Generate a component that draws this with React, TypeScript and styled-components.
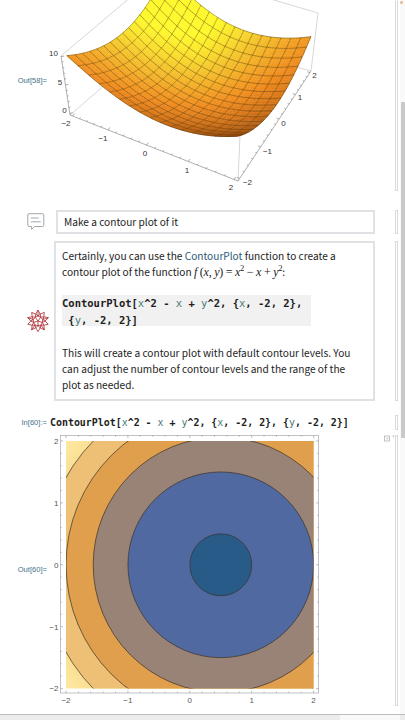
import React from 'react';
import styled, { createGlobalStyle } from 'styled-components';

const SANS = '"Noto Sans CJK SC", "Noto Sans", sans-serif';
const MONO = '"DejaVu Sans Mono", monospace';
const PLOT = '"Liberation Sans", Arial, sans-serif';

const GlobalStyle = createGlobalStyle`
  * { box-sizing: border-box; }
  body { margin: 0; background: #fff; overflow: hidden; }
`;

const Window = styled.div`
  display: grid;
  grid-template-columns: 400px 5px;
  grid-template-rows: 714px 6px;
  width: 405px;
  height: 720px;
  overflow: hidden;
  background: #fff;
  color: #1d1d1d;
  font-family: ${SANS};
`;

const Notebook = styled.main`
  display: flex;
  flex-direction: column;
`;

const Cell = styled.section<{ $height: number; $gap?: number }>`
  display: grid;
  grid-template-columns: 49px 346px 3px;
  height: ${p => p.$height}px;
  margin-top: ${p => p.$gap || 0}px;
`;

const Bracket = styled.div<{ $openTop?: boolean }>`
  border: 1px solid #dadada;
  border-top-color: ${p => (p.$openTop ? 'transparent' : '#dadada')};
`;

const Label = styled.div<{ $top?: number }>`
  padding: ${p => p.$top || 0}px 2px 0 0;
  text-align: right;
  white-space: nowrap;
  font: 7.6px/10px ${PLOT};
  color: #3f7389;
`;

const IconSlot = styled.div<{ $top: number; $left: number }>`
  padding: ${p => p.$top}px 0 0 ${p => p.$left}px;
  line-height: 0;
`;

const Question = styled.div`
  margin-left: 7px;
  width: 319px;
  height: 24px;
  padding-left: 6px;
  border: 2px solid #dfe1e4;
  font-size: 10.15px;
  line-height: 20px;
  white-space: nowrap;
`;

const Answer = styled.div`
  margin-left: 5px;
  width: 321px;
  height: 160px;
  padding: 5px 0 0 6px;
  border: 2px solid #dfe1e4;
  font-size: 10.15px;
  line-height: 16px;
  white-space: nowrap;
`;

const Paragraph = styled.p`
  margin: 0;
  height: 32px;
  line-height: 16px;
`;

const FunctionLink = styled.span`
  color: #2b5878;
`;

const Formula = styled.span`
  font-family: "Liberation Serif", serif;
  font-size: 12px;
  line-height: 1;
  letter-spacing: -0.25px;
  sup {
    font-size: 8.5px;
    line-height: 0;
    vertical-align: 5px;
  }
`;

const CodeBlock = styled.pre`
  margin: 15px 0 19px;
  width: 249px;
  height: 31px;
  background: #f1f1f1;
  font: 700 10.5px/17px ${MONO};
`;

const Input = styled.pre`
  margin: 0;
  padding: 1px 0 0 1px;
  font: 700 9.93px/14px ${MONO};
`;

const Variable = styled.span`
  color: #477b78;
  font-weight: 400;
`;

const Output = styled.div`
  display: flex;
  justify-content: space-between;
  align-items: flex-start;
  svg { display: block; }
`;

const Scrollbar = styled.div`
  display: flex;
  flex-direction: column;
  align-items: flex-end;
  background: #f9f9f9;
`;

const ScrollHint = styled.div`
  width: 3px;
  height: 3px;
  margin: 1px 2px 98px 0;
  border-radius: 50%;
  background: #e5b98c;
`;

const Thumb = styled.div`
  width: 4px;
  height: 336px;
  background: #c9c9c9;
`;

const StatusBar = styled.footer`
  grid-column: 1 / 3;
  display: grid;
  grid-template-columns: 340px 60px 5px;
  border-top: 1px solid #bdbdbd;
  background: #ececec;
`;

const StatusGap = styled.div`
  grid-column: 2;
  background: #f9f9f9;
`;

type Point = [number, number];
type Quad = [Point, Point, Point, Point];

// corners in order (-x,-y) (+x,-y) (+x,+y) (-x,+y)
const FLOOR: Quad = [[70, 115], [238, 181], [311, 71], [166, 32]];
const CEILING: Quad = [[61, 56], [241, 113], [318, 13], [165, -32]];

function quadPoint([p0, p1, p2, p3]: Quad, u: number, v: number): Point {
  const dx1 = p1[0] - p2[0];
  const dx2 = p3[0] - p2[0];
  const dy1 = p1[1] - p2[1];
  const dy2 = p3[1] - p2[1];
  const sx = p0[0] - p1[0] + p2[0] - p3[0];
  const sy = p0[1] - p1[1] + p2[1] - p3[1];
  const det = dx1 * dy2 - dx2 * dy1;
  const g = (sx * dy2 - dx2 * sy) / det;
  const h = (dx1 * sy - sx * dy1) / det;
  const w = g * u + h * v + 1;
  return [
    ((p1[0] - p0[0] + g * p1[0]) * u + (p3[0] - p0[0] + h * p3[0]) * v + p0[0]) / w,
    ((p1[1] - p0[1] + g * p1[1]) * u + (p3[1] - p0[1] + h * p3[1]) * v + p0[1]) / w,
  ];
}

const f = (x: number, y: number) => x * x - x + y * y;

function project(x: number, y: number): Point {
  const u = (x + 2.08) / 4.16;
  const v = (y + 2.08) / 4.16;
  const t = (f(x, y) + 0.3) / 10.4;
  const a = quadPoint(FLOOR, u, v);
  const b = quadPoint(CEILING, u, v);
  return [a[0] + (b[0] - a[0]) * t, a[1] + (b[1] - a[1]) * t];
}

const RAMP: [number, number[]][] = [
  [-0.6, [150, 74, 12]],
  [-0.35, [205, 108, 18]],
  [-0.08, [240, 138, 26]],
  [0.08, [242, 160, 32]],
  [0.28, [244, 196, 40]],
  [0.5, [255, 248, 40]],
];

function shade(x: number, y: number) {
  const nx = -(2 * x - 1) * 0.156;
  const ny = -2 * y * 0.156;
  // slopes facing the yellow light have nx > 0 and ny < 0
  const t = (nx - ny) / Math.SQRT2 / Math.hypot(nx, ny, 1) - 0.08 * Math.abs(nx + ny);
  let i = 0;
  while (i < RAMP.length - 2 && t > RAMP[i + 1][0]) i++;
  const [t0, c0] = RAMP[i];
  const [t1, c1] = RAMP[i + 1];
  const k = Math.max(0, Math.min(1, (t - t0) / (t1 - t0)));
  return `rgb(${c0.map((c, n) => Math.round(c + (c1[n] - c) * k)).join(',')})`;
}

const STEPS = 16;
const SUB = 4;
const N = STEPS * SUB;
const at = (i: number) => -2 + (4 * i) / N;

interface Patch {
  points: string;
  fill: string;
  edges: string;
}

// painted from the far corner to the near one
const patches: Patch[] = [];
for (let j = N - 1; j >= 0; j--) {
  for (let i = 0; i < N; i++) {
    const a = project(at(i), at(j));
    const b = project(at(i + 1), at(j));
    const c = project(at(i + 1), at(j + 1));
    const d = project(at(i), at(j + 1));
    let edges = '';
    if (i % SUB === 0) edges += `M${a}L${d}`;
    if ((j + 1) % SUB === 0) edges += `M${d}L${c}`;
    if (i === N - 1) edges += `M${b}L${c}`;
    if (j === 0) edges += `M${a}L${b}`;
    patches.push({
      points: [a, b, c, d].join(' '),
      fill: shade(at(i + 0.5), at(j + 0.5)),
      edges,
    });
  }
}

const AXIS_LABELS: [string, number, number][] = [
  ['10', 53.5, 56], ['5', 60, 85], ['0', 64.5, 112.5],
  ['−2', 66, 125.5], ['−1', 103, 140.5], ['0', 145, 156], ['1', 187, 172.5], ['2', 231, 189.5],
  ['−2', 247.5, 184.5], ['−1', 267.5, 153.5], ['0', 283.5, 125.5], ['1', 300, 100], ['2', 314.5, 77.5],
];

const axisTicks = (() => {
  let d = '';
  for (let k = 0; k <= 20; k++) {
    const u = (k / 5 + 0.08) / 4.16;
    const len = k % 5 === 0 ? 2.6 : 1.4;
    const [x, y] = quadPoint(FLOOR, u, 0);
    d += `M${x},${y}l${len * 0.6},${-len}`;
    const [x2, y2] = quadPoint(FLOOR, 1, u);
    d += `M${x2},${y2}l${-len},${-len * 0.35}`;
  }
  for (let k = 0; k <= 10; k++) {
    const t = (k + 0.3) / 10.4;
    d += `M${70 - 9 * t},${115 - 59 * t}l${k % 5 ? 1.5 : 3},-.5`;
  }
  return d;
})();

function SurfacePlot() {
  return (
    <svg width="345" height="191" viewBox="49 0 345 191" fontFamily={PLOT}>
      <g fill="none" stroke="#d0cccc" strokeWidth=".8">
        <path d="M61 56L165-32L318 13L311 71L166 32L70 115M166 32V-32M238 181L240 135" />
      </g>
      <path d="M61 56L70 115L238 181L311 71" fill="none" stroke="#8c8c8c" strokeWidth=".7" />
      <path d={axisTicks} stroke="#777" strokeWidth=".6" />
      {patches.map((p, n) => (
        <g key={n}>
          <polygon points={p.points} fill={p.fill} stroke={p.fill} strokeWidth=".4" />
          {p.edges && <path d={p.edges} stroke="#4c3508" strokeOpacity=".75" strokeWidth=".6" />}
        </g>
      ))}
      <g fontSize="8" fill="#333" textAnchor="middle">
        {AXIS_LABELS.map(([text, x, y], n) => (
          <text key={n} x={x} y={y}>{text}</text>
        ))}
      </g>
    </svg>
  );
}

const UNIT = 61.9;
const CONTOURS = [
  { level: 8, fill: '#edc075' },
  { level: 6, fill: '#df9f4c' },
  { level: 4, fill: '#998376' },
  { level: 2, fill: '#5069a0' },
  { level: 0, fill: '#285b88' },
];

const frameTicks = Array.from({ length: 21 }, (_, k) => {
  const p = (k * UNIT) / 5;
  const len = k % 5 === 0 ? 2.4 : 1.3;
  return `M${66 + p} 693v${-len}M${66 + p} 435.5v${len}M60.5 ${441 + p}h${len}M318.5 ${441 + p}h${-len}`;
}).join('');

function ContourPlot() {
  return (
    <svg width="275" height="270" viewBox="49 435 275 270" fontFamily={PLOT}>
      <defs>
        <clipPath id="region">
          <rect x="66" y="441" width="247.5" height="247.5" />
        </clipPath>
        <radialGradient id="outer" gradientUnits="userSpaceOnUse" cx="221" cy="565" r="200">
          <stop offset=".88" stopColor="#fadf93" />
          <stop offset="1" stopColor="#ffeaa4" />
        </radialGradient>
      </defs>
      <g clipPath="url(#region)" stroke="#3b3029" strokeWidth=".7">
        <rect x="66" y="441" width="248" height="248" fill="url(#outer)" stroke="none" />
        {CONTOURS.map(c => (
          <circle key={c.level} cx="220.8" cy="564.8" r={Math.sqrt(c.level + 0.25) * UNIT} fill={c.fill} />
        ))}
      </g>
      <rect x="60.5" y="435.5" width="258" height="257.5" fill="none" stroke="#a5a9b0" strokeWidth=".7" />
      <path d={frameTicks} stroke="#8a8f98" strokeWidth=".6" />
      <g fontSize="8" fill="#555">
        {[-2, -1, 0, 1, 2].map(v => {
          const text = String(v).replace('-', '−');
          return (
            <React.Fragment key={v}>
              <text x="58.5" y={567.6 - v * UNIT} textAnchor="end">{text}</text>
              <text x={189.8 + v * UNIT} y="703" textAnchor="middle">{text}</text>
            </React.Fragment>
          );
        })}
      </g>
    </svg>
  );
}

function ChatIcon() {
  return (
    <svg width="18" height="18" viewBox="0 0 18 18" fill="none" stroke="#a3a8af" strokeWidth="1">
      <path d="M2 .7H15.6Q16.8.7 16.8 1.9V12.3Q16.8 13.5 15.6 13.5H7.6L4.6 16.4V13.5H2Q.8 13.5.8 12.3V1.9Q.8.7 2 .7Z" />
      <path d="M3.8 5H11.6M3.8 8.8H13.8" />
    </svg>
  );
}

const polar = (r: number, deg: number): Point => [
  +(11 + r * Math.sin((deg * Math.PI) / 180)).toFixed(2),
  +(11 - r * Math.cos((deg * Math.PI) / 180)).toFixed(2),
];

// ten points around a pentagonal core
const spikes = [0, 1, 2, 3, 4].map(k => {
  const a = k * 72;
  return [
    `M${polar(7.2, a - 18)}L${polar(10.9, a)}L${polar(7.2, a + 18)}`,
    `L${polar(10.7, a + 36)}L${polar(7.2, a + 54)}`,
    `M${polar(5, a)}L${polar(10.9, a)}`,
    `M11,11L${polar(4.6, a + 36)}`,
    `M${polar(4.6, a - 36)}L${polar(5, a)}L${polar(4.6, a + 36)}`,
    `M${polar(4.6, a - 36)}L${polar(7.2, a - 18)}L${polar(5, a)}L${polar(7.2, a + 18)}L${polar(4.6, a + 36)}`,
  ].join('');
}).join('');

function SpikeyIcon() {
  return (
    <svg width="22" height="22" viewBox="0 0 22 22" fill="none" stroke="#a92a30" strokeWidth=".8" strokeLinejoin="round">
      <path d={spikes} />
    </svg>
  );
}

function OpenIcon() {
  return (
    <svg width="11" height="7" viewBox="0 0 11 7" fill="none" stroke="#a8a8a8" strokeWidth=".7">
      <rect x=".5" y="1" width="5" height="5" />
      <path d="M2 3h1M3 4.5l1.5-2M8.5.8h1.2v1.6" />
    </svg>
  );
}

// single letters x and y are coloured as local variables
function Code({ text }: { text: string }) {
  return (
    <>
      {text.split(/(\b[xy]\b)/).map((part, n) =>
        /^[xy]$/.test(part) ? <Variable key={n}>{part}</Variable> : part
      )}
    </>
  );
}

export default function App() {
  return (
    <Window>
      <GlobalStyle />
      <Notebook>
        <Cell $height={191}>
          <Label $top={76}>Out[58]=</Label>
          <SurfacePlot />
          <Bracket $openTop />
        </Cell>
        <Cell $height={24} $gap={19}>
          <IconSlot $top={3} $left={27}><ChatIcon /></IconSlot>
          <Question>Make a contour plot of it</Question>
          <Bracket />
        </Cell>
        <Cell $height={160} $gap={7}>
          <IconSlot $top={69} $left={27}><SpikeyIcon /></IconSlot>
          <Answer>
            <Paragraph>
              Certainly, you can use the <FunctionLink>ContourPlot</FunctionLink> function to create a
              <br />
              contour plot of the function{' '}
              <Formula>
                <i>f</i> (<i>x</i>, <i>y</i>) = <i>x</i><sup>2</sup> − <i>x</i> + <i>y</i><sup>2</sup>
              </Formula>
              :
            </Paragraph>
            <CodeBlock>
              <Code text={'ContourPlot[x^2 - x + y^2, {x, -2, 2},\n {y, -2, 2}]'} />
            </CodeBlock>
            <Paragraph>
              This will create a contour plot with default contour levels. You
              <br />
              can adjust the number of contour levels and the range of the
              <br />
              plot as needed.
            </Paragraph>
          </Answer>
          <Bracket />
        </Cell>
        <Cell $height={13} $gap={14}>
          <Label $top={3}>In[60]:=</Label>
          <Input><Code text="ContourPlot[x^2 - x + y^2, {x, -2, 2}, {y, -2, 2}]" /></Input>
          <Bracket />
        </Cell>
        <Cell $height={271} $gap={7}>
          <Label $top={130}>Out[60]=</Label>
          <Output>
            <ContourPlot />
            <OpenIcon />
          </Output>
          <Bracket />
        </Cell>
      </Notebook>
      <Scrollbar>
        <ScrollHint />
        <Thumb />
      </Scrollbar>
      <StatusBar>
        <StatusGap />
      </StatusBar>
    </Window>
  );
}
